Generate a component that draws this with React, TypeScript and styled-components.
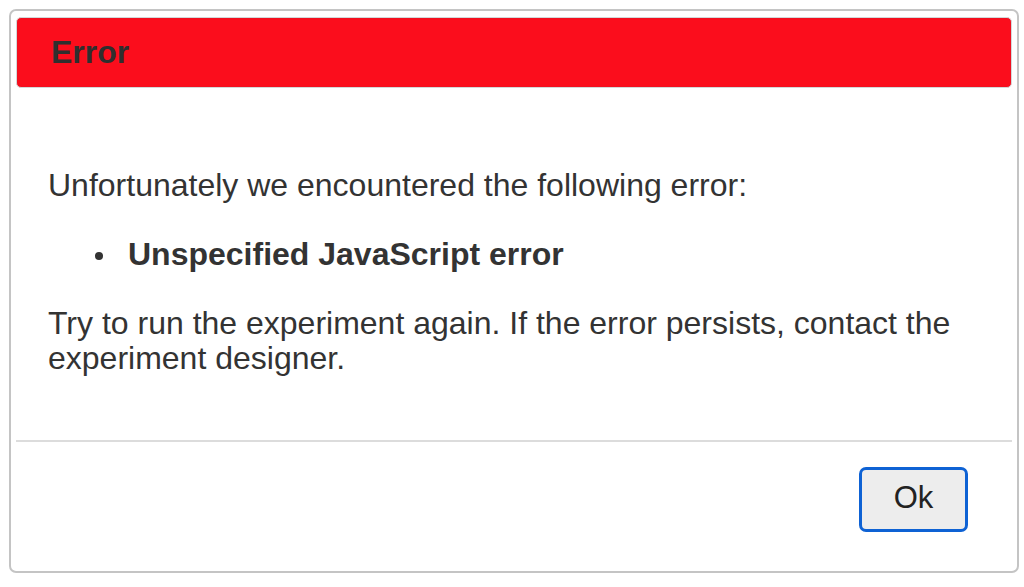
import styled, { createGlobalStyle } from "styled-components";

const GlobalStyle = createGlobalStyle`
    html, body {
        margin: 0;
        padding: 0;
        background: #ffffff;
    }
    body {
        font-family: "Liberation Sans", Arial, sans-serif;
        color: #333333;
    }
`;

const App = () => {
    return (
        <>
            <GlobalStyle />
            <Page>
                <Dialog>
                    <Header>
                        <Title>Error</Title>
                    </Header>
                    <Body>
                        <Text>Unfortunately we encountered the following error:</Text>
                        <ErrList>
                            <ErrItem>Unspecified JavaScript error</ErrItem>
                        </ErrList>
                        <Text>
                            Try to run the experiment again. If the error persists, contact the
                            experiment designer.
                        </Text>
                    </Body>
                    <Divider />
                    <Footer>
                        <OkBtn>Ok</OkBtn>
                    </Footer>
                </Dialog>
            </Page>
        </>
    );
};
export default App;

const Page = styled.div`
    display: flex;
    width: 1024px;
    height: 587px;
    padding: 9px 5px 0 9px;
    box-sizing: border-box;
`;

const Dialog = styled.div`
    display: flex;
    flex-direction: column;
    width: 1010px;
    height: 564px;
    box-sizing: border-box;
    border: 2px solid #c4c4c4;
    border-radius: 7px;
    padding: 6px 5px 0 5px;
    background: #ffffff;
`;

const Header = styled.div`
    display: flex;
    align-items: center;
    height: 71px;
    box-sizing: border-box;
    padding-left: 34px;
    border: 1px solid #d4d8d8;
    border-radius: 5px;
    background: #fb0d1c;
    box-shadow: inset 0 0 0 1px #f01020;
`;

const Title = styled.div`
    font-size: 32px;
    font-weight: 700;
    color: #2f2f2f;
`;

const Body = styled.div`
    display: flex;
    flex-direction: column;
    gap: 34px;
    padding: 80px 32px 64px 32px;
`;

const Text = styled.p`
    margin: 0;
    font-size: 32px;
    line-height: 35px;
    color: #333333;
`;

const ErrList = styled.ul`
    display: flex;
    flex-direction: column;
    margin: 0;
    padding-left: 47px;
    list-style: none;
`;

const ErrItem = styled.li`
    display: flex;
    align-items: center;
    gap: 25px;
    font-size: 32px;
    line-height: 35px;
    font-weight: 700;
    color: #333333;
    &::before {
        content: "";
        flex: none;
        width: 8px;
        height: 8px;
        margin-top: 2px;
        border-radius: 50%;
        background: #333333;
    }
`;

const Divider = styled.div`
    height: 2px;
    background: #dcdcdc;
`;

const Footer = styled.div`
    display: flex;
    justify-content: flex-end;
    padding: 25px 44px 0 0;
`;

const OkBtn = styled.button`
    display: flex;
    align-items: center;
    justify-content: center;
    width: 109px;
    height: 65px;
    box-sizing: border-box;
    border: 3px solid #0e62d4;
    border-radius: 7px;
    background: #ededed;
    font-family: "Liberation Sans", Arial, sans-serif;
    font-size: 31px;
    color: #222222;
    cursor: pointer;
    padding: 0 0 3px 0;
`;
